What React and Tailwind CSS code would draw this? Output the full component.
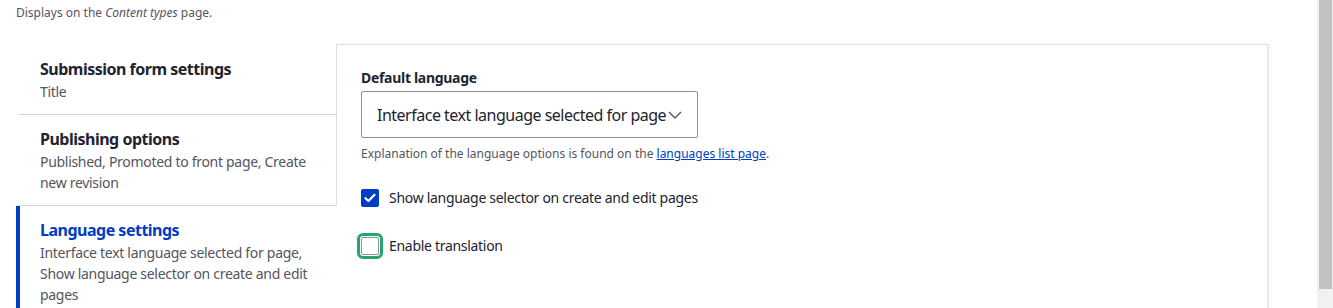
import { useState } from 'react'

function Tab({ title, summary, active, first }) {
  return (
    <div
      className={
        'pr-4 pb-3 ' +
        (first ? 'pt-[13px] ' : 'pt-3 ') +
        (active
          ? 'border-l-4 border-[#003cc5] pl-5 bg-white w-[321px]'
          : 'border-l-4 border-l-transparent pl-5 border-r border-b border-r-[#dedfe4] border-b-[#d3d4d9] w-[321px]')
      }
    >
      <div className={'text-[16px] leading-6 font-bold tracking-[-0.5px] ' + (active ? 'text-[#003cc5]' : 'text-[#222330]')}>{title}</div>
      <div className="text-[14px] leading-[21px] tracking-[-0.3px] text-[#545560]">{summary}</div>
    </div>
  )
}

function Checkbox({ checked, focused, label, onChange }) {
  return (
    <label className="flex items-center gap-[10px] cursor-pointer">
      <span
        className={
          'flex items-center justify-center w-[18px] h-[18px] rounded-[2px] ' +
          (checked ? 'bg-[#003cc5]' : 'bg-white border border-[#8e929c]') +
          (focused ? ' outline-[3px] outline-[#26a769] outline-offset-[1px]' : '')
        }
        onClick={onChange}
      >
        {checked && (
          <svg width="12" height="10" viewBox="0 0 12 10" fill="none">
            <path d="M1.5 5.2 4.4 8 10.5 1.8" stroke="white" strokeWidth="2.2" strokeLinecap="round" strokeLinejoin="round" />
          </svg>
        )}
      </span>
      <span className="text-[14px] leading-[18px] tracking-[-0.3px] text-[#222330]">{label}</span>
    </label>
  )
}

export default function App() {
  const [showSelector, setShowSelector] = useState(true)
  const [translate, setTranslate] = useState(false)

  return (
    <div className="flex h-[308px] overflow-hidden bg-white" style={{ fontFamily: '"Noto Sans", sans-serif' }}>
      <div className="flex-1 pl-4 pr-[49px]">
        <div className="text-[12px] leading-[18px] text-[#545560] pt-1">
          Displays on the <em>Content types</em> page.
        </div>
        <div className="flex mt-[22px]">
          <div className="flex flex-col shrink-0">
            <Tab first title="Submission form settings" summary="Title" />
            <Tab title="Publishing options" summary="Published, Promoted to front page, Create new revision" />
            <Tab active title="Language settings" summary="Interface text language selected for page, Show language selector on create and edit pages" />
          </div>
          <div className="flex-1 border-t border-r border-[#dedfe4] shadow-[2px_0_3px_rgba(0,0,0,0.06)] pl-6 pt-[24px]">
            <div className="text-[14px] leading-[18px] font-bold tracking-[-0.3px] text-[#222330] mb-[4px]">Default language</div>
            <div className="flex items-center w-[337px] h-[47px] border border-[#8e929c] rounded-[2px] pl-[15px] pr-[15px]">
              <span className="text-[16px] tracking-[-0.5px] text-[#222330] whitespace-nowrap">Interface text language selected for page</span>
              <svg className="ml-auto shrink-0" width="14" height="8" viewBox="0 0 14 8" fill="none">
                <path d="M1 1l6 6 6-6" stroke="#545560" strokeWidth="1.4" />
              </svg>
            </div>
            <div className="text-[12px] leading-[18px] text-[#545560] mt-[7px]">
              Explanation of the language options is found on the{' '}
              <a href="#" className="text-[#003cc5] underline">languages list page</a>.
            </div>
            <div className="mt-[26px] flex flex-col gap-[30px]">
              <Checkbox checked={showSelector} onChange={() => setShowSelector(!showSelector)} label="Show language selector on create and edit pages" />
              <Checkbox checked={translate} focused onChange={() => setTranslate(!translate)} label="Enable translation" />
            </div>
          </div>
        </div>
      </div>
      <div className="w-4 shrink-0 bg-[#f1f1f1] pl-[2px] pr-[1px]">
        <div className="h-[289px] bg-[#c1c1c1]" />
      </div>
    </div>
  )
}
